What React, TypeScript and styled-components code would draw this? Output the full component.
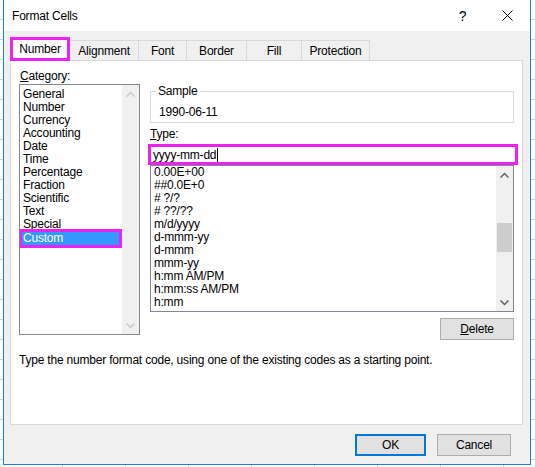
import styled, { createGlobalStyle } from "styled-components";

const GlobalStyle = createGlobalStyle`
  html, body {
    margin: 0;
    padding: 0;
  }
  body {
    width: 535px;
    height: 467px;
    overflow: hidden;
    background-color: #ffffff;
    background-image:
      repeating-linear-gradient(to bottom, transparent 0 19px, #d4d4d4 19px 20px),
      repeating-linear-gradient(to right, transparent 0 62px, #d4d4d4 62px 63px);
    font-family: "Liberation Sans", Arial, sans-serif;
    font-size: 12px;
    letter-spacing: -0.2px;
    color: #000;
  }
`;

const ACCENT = "#ee22ee";

const Dialog = styled.div`
  box-sizing: border-box;
  margin-left: 3px;
  width: 528px;
  height: 465px;
  background: #f0f0f0;
  border: 1px solid #1883d7;
  border-top: none;
  display: flex;
  flex-direction: column;
`;

const TitleBar = styled.div`
  height: 31px;
  background: #fff;
  display: flex;
  align-items: center;
  padding-left: 8px;
`;

const Title = styled.span`
  flex: 1;
  font-size: 12px;
`;

const TitleButton = styled.div`
  width: 45px;
  height: 31px;
  display: flex;
  align-items: center;
  justify-content: center;
  font-size: 14px;
`;

const Body = styled.div`
  padding: 7px 6px 0 6px;
  display: flex;
  flex-direction: column;
`;

const TabStrip = styled.div`
  display: flex;
  align-items: flex-end;
  height: 23px;
  margin-bottom: -1px;
  position: relative;
  z-index: 1;
`;

const Tab = styled.div<{ $w: number; $active?: boolean }>`
  box-sizing: border-box;
  width: ${(p) => p.$w}px;
  height: ${(p) => (p.$active ? 24 : 21)}px;
  display: flex;
  align-items: center;
  justify-content: center;
  background: ${(p) => (p.$active ? "#fff" : "#f0f0f0")};
  border: ${(p) => (p.$active ? `3px solid ${ACCENT}` : "1px solid #d9d9d9")};
  border-left: ${(p) => (p.$active ? `3px solid ${ACCENT}` : "none")};
  border-bottom: ${(p) => (p.$active ? `3px solid ${ACCENT}` : "1px solid #d9d9d9")};
  padding-top: ${(p) => (p.$active ? 0 : 1)}px;
`;

const Panel = styled.div`
  box-sizing: border-box;
  width: 513px;
  height: 365px;
  background: #fff;
  border: 1px solid #d9d9d9;
  padding: 7px 8px 0 8px;
  display: grid;
  grid-template-columns: 121px 364px;
  column-gap: 10px;
  align-content: start;
`;

const Column = styled.div`
  display: flex;
  flex-direction: column;
`;

const FieldLabel = styled.label`
  line-height: 16px;
  height: 16px;
  display: block;
  margin-left: 1px;
`;

const ListBox = styled.div<{ $h: number }>`
  box-sizing: border-box;
  height: ${(p) => p.$h}px;
  border: 1px solid #828790;
  background: #fff;
  display: flex;
`;

const ListItems = styled.ul`
  flex: 1;
  list-style: none;
  margin: 0;
  padding: 3px 0 0 0;
  overflow: hidden;
`;

const TypeItems = styled(ListItems)`
  padding-top: 0;
`;

const Item = styled.li<{ $selected?: boolean }>`
  height: 13px;
  line-height: 13px;
  padding-left: ${(p) => (p.$selected ? 1 : 3)}px;
  white-space: nowrap;
  background: ${(p) => (p.$selected ? "#3399ff" : "transparent")};
  color: ${(p) => (p.$selected ? "#fff" : "#000")};
  margin: ${(p) => (p.$selected ? "1px 3px 0 2px" : "0")};
  outline: ${(p) => (p.$selected ? `3px solid ${ACCENT}` : "none")};
`;

const ScrollBar = styled.div<{ $disabled?: boolean }>`
  width: 17px;
  background: #f0f0f0;
  display: flex;
  flex-direction: column;
  justify-content: space-between;
  align-items: center;
  color: ${(p) => (p.$disabled ? "#c8c8c8" : "#606060")};
`;

const ScrollArrow = styled.div`
  height: 17px;
  display: flex;
  align-items: center;
  justify-content: center;
`;

const ScrollTrack = styled.div`
  flex: 1;
  width: 100%;
  display: flex;
  flex-direction: column;
`;

const Thumb = styled.div`
  margin: 40px 1px 0 1px;
  height: 29px;
  background: #cdcdcd;
`;

const GroupBox = styled.div`
  box-sizing: border-box;
  position: relative;
  margin-top: 23px;
  height: 32px;
  border: 1px solid #dcdcdc;
  padding: 12px 0 0 8px;
  line-height: 16px;
`;

const GroupLegend = styled.span`
  position: absolute;
  top: -9px;
  left: 5px;
  padding: 0 2px;
  background: #fff;
  line-height: 16px;
`;

const TypeLabel = styled(FieldLabel)`
  margin-top: 3px;
  margin-left: 0;
`;

const TypeInput = styled.div`
  box-sizing: border-box;
  margin: 2px 0 0 -2px;
  width: 370px;
  height: 21px;
  border: 3px solid ${ACCENT};
  padding-left: 2px;
  display: flex;
  align-items: center;
  background: #fff;
`;

const Caret = styled.span`
  display: inline-block;
  width: 1px;
  height: 14px;
  background: #000;
  margin-left: 1px;
`;

const ButtonRow = styled.div`
  display: flex;
  justify-content: flex-end;
  margin-top: 6px;
`;

const Button = styled.button<{ $default?: boolean }>`
  box-sizing: border-box;
  width: ${(p) => (p.$default ? 71 : 74)}px;
  height: 22px;
  font-family: inherit;
  font-size: 12px;
  letter-spacing: inherit;
  color: #000;
  background: #e1e1e1;
  border: ${(p) => (p.$default ? "2px solid #0078d7" : "1px solid #adadad")};
  padding: 0;
`;

const Description = styled.p`
  grid-column: 1 / span 2;
  margin: 12px 0 0 0;
  line-height: 16px;
`;

const Footer = styled.div`
  display: flex;
  justify-content: flex-end;
  gap: 11px;
  padding: 9px 13px 0 0;
`;

const categories = [
  "General",
  "Number",
  "Currency",
  "Accounting",
  "Date",
  "Time",
  "Percentage",
  "Fraction",
  "Scientific",
  "Text",
  "Special",
  "Custom",
];

const types = [
  "0.00E+00",
  "##0.0E+0",
  "# ?/?",
  "# ??/??",
  "m/d/yyyy",
  "d-mmm-yy",
  "d-mmm",
  "mmm-yy",
  "h:mm AM/PM",
  "h:mm:ss AM/PM",
  "h:mm",
];

const tabs: [string, number][] = [
  ["Number", 60],
  ["Alignment", 69],
  ["Font", 48],
  ["Border", 60],
  ["Fill", 55],
  ["Protection", 68],
];

function Chevron({ up }: { up?: boolean }) {
  return (
    <svg width="9" height="6" viewBox="0 0 9 6">
      <path
        d={up ? "M0.5 5.5 L4.5 1.5 L8.5 5.5" : "M0.5 0.5 L4.5 4.5 L8.5 0.5"}
        fill="none"
        stroke="currentColor"
        strokeWidth="1.5"
      />
    </svg>
  );
}

function CloseIcon() {
  return (
    <svg width="11" height="11" viewBox="0 0 11 11">
      <path d="M0.5 0.5 L10.5 10.5 M10.5 0.5 L0.5 10.5" stroke="#000" strokeWidth="1" />
    </svg>
  );
}

function Underlined({ text }: { text: string }) {
  return (
    <>
      <u>{text[0]}</u>
      {text.slice(1)}
    </>
  );
}

export default function App() {
  return (
    <>
      <GlobalStyle />
      <Dialog>
        <TitleBar>
          <Title>Format Cells</Title>
          <TitleButton>?</TitleButton>
          <TitleButton>
            <CloseIcon />
          </TitleButton>
        </TitleBar>
        <Body>
          <TabStrip>
            {tabs.map(([name, w], i) => (
              <Tab key={name} $w={w} $active={i === 0}>
                {name}
              </Tab>
            ))}
          </TabStrip>
          <Panel>
            <Column>
              <FieldLabel>
                <Underlined text="Category:" />
              </FieldLabel>
              <ListBox $h={251}>
                <ListItems>
                  {categories.map((c) => (
                    <Item key={c} $selected={c === "Custom"}>
                      {c}
                    </Item>
                  ))}
                </ListItems>
                <ScrollBar $disabled>
                  <ScrollArrow>
                    <Chevron up />
                  </ScrollArrow>
                  <ScrollArrow>
                    <Chevron />
                  </ScrollArrow>
                </ScrollBar>
              </ListBox>
            </Column>
            <Column>
              <GroupBox>
                <GroupLegend>Sample</GroupLegend>
                1990-06-11
              </GroupBox>
              <TypeLabel>
                <Underlined text="Type:" />
              </TypeLabel>
              <TypeInput>
                yyyy-mm-dd
                <Caret />
              </TypeInput>
              <ListBox $h={147}>
                <TypeItems>
                  {types.map((t) => (
                    <Item key={t}>{t}</Item>
                  ))}
                </TypeItems>
                <ScrollBar>
                  <ScrollArrow>
                    <Chevron up />
                  </ScrollArrow>
                  <ScrollTrack>
                    <Thumb />
                  </ScrollTrack>
                  <ScrollArrow>
                    <Chevron />
                  </ScrollArrow>
                </ScrollBar>
              </ListBox>
              <ButtonRow>
                <Button>
                  <Underlined text="Delete" />
                </Button>
              </ButtonRow>
            </Column>
            <Description>
              Type the number format code, using one of the existing codes as a starting point.
            </Description>
          </Panel>
          <Footer>
            <Button $default>OK</Button>
            <Button>Cancel</Button>
          </Footer>
        </Body>
      </Dialog>
    </>
  );
}
